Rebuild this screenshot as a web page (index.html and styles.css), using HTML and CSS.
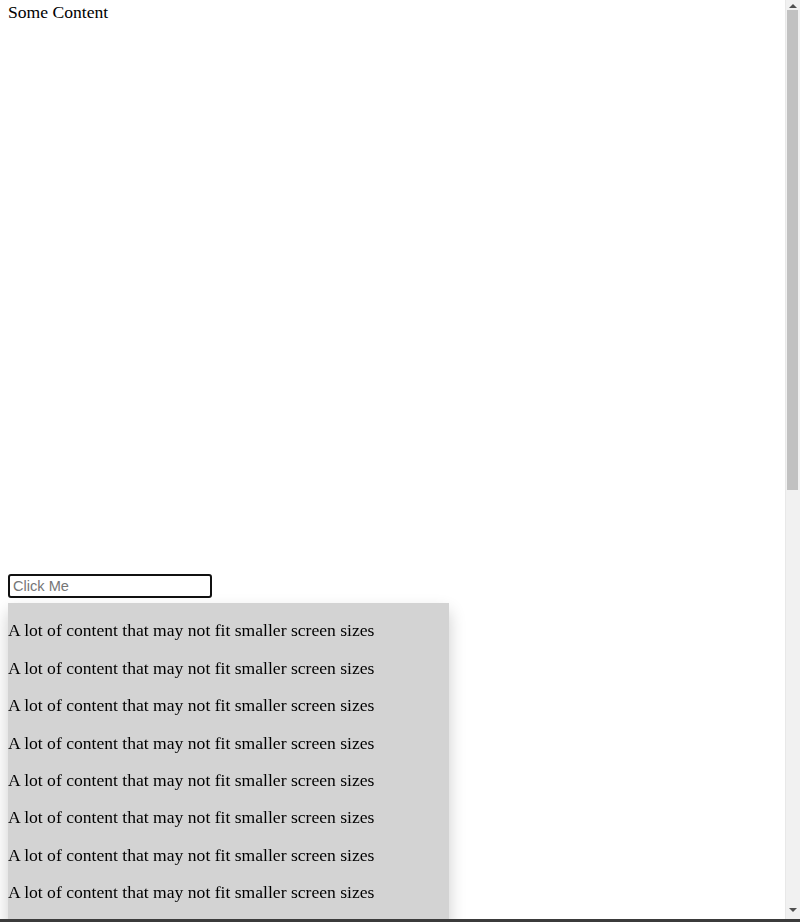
FILE: index.html
```html
<!DOCTYPE html>
<html>
<head>
<meta charset="utf-8">
<link rel="stylesheet" href="styles.css">
</head>
<body>
<div class="viewport">
  <div class="scroller">
    <div class="page">
      <div class="top-text">Some Content</div>
      <div class="field">
        <input class="click-input" type="text" placeholder="Click Me" autofocus>
      </div>
      <div class="popup">
        <p>A lot of content that may not fit smaller screen sizes</p>
        <p>A lot of content that may not fit smaller screen sizes</p>
        <p>A lot of content that may not fit smaller screen sizes</p>
        <p>A lot of content that may not fit smaller screen sizes</p>
        <p>A lot of content that may not fit smaller screen sizes</p>
        <p>A lot of content that may not fit smaller screen sizes</p>
        <p>A lot of content that may not fit smaller screen sizes</p>
        <p>A lot of content that may not fit smaller screen sizes</p>
        <p>A lot of content that may not fit smaller screen sizes</p>
        <p>A lot of content that may not fit smaller screen sizes</p>
        <p>A lot of content that may not fit smaller screen sizes</p>
        <p>A lot of content that may not fit smaller screen sizes</p>
        <p>A lot of content that may not fit smaller screen sizes</p>
        <p>A lot of content that may not fit smaller screen sizes</p>
        <p>A lot of content that may not fit smaller screen sizes</p>
        <p>A lot of content that may not fit smaller screen sizes</p>
        <p>A lot of content that may not fit smaller screen sizes</p>
        <p>A lot of content that may not fit smaller screen sizes</p>
        <p>A lot of content that may not fit smaller screen sizes</p>
        <p>A lot of content that may not fit smaller screen sizes</p>
        <p>A lot of content that may not fit smaller screen sizes</p>
        <p>A lot of content that may not fit smaller screen sizes</p>
        <p>A lot of content that may not fit smaller screen sizes</p>
        <p>A lot of content that may not fit smaller screen sizes</p>
        <p>A lot of content that may not fit smaller screen sizes</p>
        <p>A lot of content that may not fit smaller screen sizes</p>
        <p>A lot of content that may not fit smaller screen sizes</p>
        <p>A lot of content that may not fit smaller screen sizes</p>
      </div>
    </div>
  </div>
  <div class="scrollbar" aria-hidden="true">
    <div class="sb-button"><span class="arrow-up"></span></div>
    <div class="sb-track">
      <div class="sb-thumb"></div>
    </div>
    <div class="sb-button sb-button-down"><span class="arrow-down"></span></div>
  </div>
</div>
<div class="bottom-strip"></div>
</body>
</html>
```
FILE: styles.css
```css
html, body {
  margin: 0;
  padding: 0;
  height: 922px;
  overflow: hidden;
  background: #ffffff;
}
body {
  display: flex;
  flex-direction: column;
  font-family: "Liberation Serif", "Times New Roman", serif;
  font-size: 17.6px;
  color: #000000;
}
.viewport {
  height: 919px;
  flex: none;
  display: flex;
  flex-direction: row;
}
.scroller {
  flex: 1;
  min-width: 0;
  overflow: hidden;
}
.page {
  padding: 2px 0 9px 8px;
  display: flex;
  flex-direction: column;
  align-items: flex-start;
}
.top-text {
  line-height: normal;
}
.field {
  margin-top: 551px;
}
.click-input {
  display: block;
  box-sizing: border-box;
  width: 204px;
  height: 24px;
  margin: 0;
  padding: 1px 3px;
  font-family: "Liberation Sans", Arial, sans-serif;
  font-size: 14.6px;
  color: #000;
  border: 2px solid #111;
  border-radius: 3px;
  background: #fff;
  outline: none;
  caret-color: #000;
}
.click-input::placeholder {
  color: #767676;
}
.popup {
  margin-top: 5px;
  width: 441px;
  background: #d3d3d3;
  box-shadow: 0 8px 16px rgba(0, 0, 0, 0.2);
  display: flow-root;
}
.popup p {
  margin: 17.4px 0;
  line-height: 20px;
}

/* scrollbar drawn as a column */
.scrollbar {
  width: 15px;
  flex: none;
  display: flex;
  flex-direction: column;
  background: #f1f1f1;
  border-left: 1px solid #e8e8e8;
  box-sizing: border-box;
}
.sb-button {
  height: 10px;
  flex: none;
  display: flex;
  align-items: center;
  justify-content: center;
}
.sb-button-down {
  height: 14px;
  align-items: flex-start;
}
.arrow-up {
  width: 0;
  height: 0;
  border-left: 4px solid transparent;
  border-right: 4px solid transparent;
  border-bottom: 4px solid #505050;
  margin-top: 1px;
}
.arrow-down {
  width: 0;
  height: 0;
  border-left: 4px solid transparent;
  border-right: 4px solid transparent;
  border-top: 4px solid #505050;
  margin-top: 3px;
}
.sb-track {
  flex: 1;
  padding: 0 2px 0 1px;
  display: flex;
  flex-direction: column;
}
.sb-thumb {
  height: 480px;
  background: #c1c1c1;
}
.bottom-strip {
  flex: 1;
  background: #3b3b3b;
}
```
